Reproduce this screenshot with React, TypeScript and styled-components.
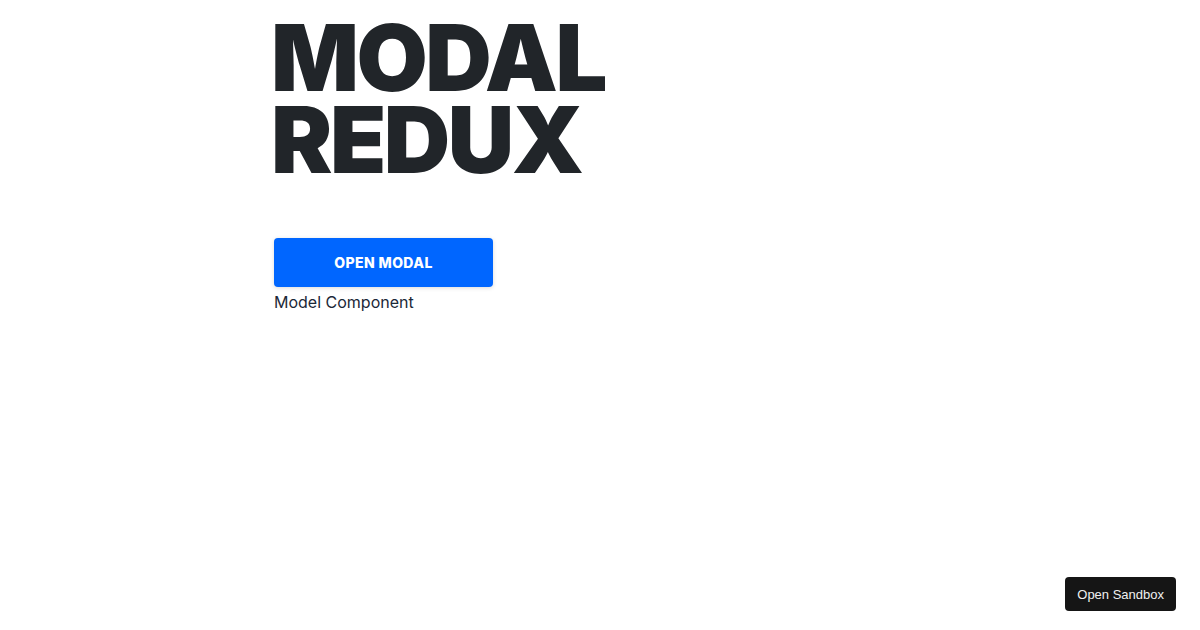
import React from "react"
import styled, { createGlobalStyle } from "styled-components"

const GlobalStyle = createGlobalStyle`
    html, body {
        margin:0;
        padding:0;
        background:#ffffff;
    }
    body {
        font-family:Inter, "Noto Sans", sans-serif;
        color:#212529;
    }
`

const App = () => {
    return(
        <>
            <GlobalStyle/>
            <Page>
                <Content>
                    <Title>
                        <TitleLine>MODAL</TitleLine>
                        <TitleLine>REDUX</TitleLine>
                    </Title>
                    <OpenButton type="button">OPEN MODAL</OpenButton>
                    <Caption>Model Component</Caption>
                </Content>
                <SandboxLink>Open Sandbox</SandboxLink>
            </Page>
        </>
    )
}

const Page = styled.div`
    position:relative;
    width:1200px;
    height:630px;
    overflow:hidden;
`
const Content = styled.div`
    display:flex;
    flex-direction:column;
    align-items:flex-start;
    padding-left:274px;
    padding-top:15px;
`
const Title = styled.h1`
    margin:0 0 0 -3px;
    display:flex;
    flex-direction:column;
    font-family:Inter, sans-serif;
    font-weight:900;
    font-size:92px;
    letter-spacing:-2.5px;
    color:#212529;
`
const TitleLine = styled.span`
    display:block;
    height:85px;
    line-height:92px;
    margin-top:-3px;
`
const OpenButton = styled.button`
    margin-top:59px;
    width:219px;
    height:49px;
    border:none;
    border-radius:4px;
    background:#0066ff;
    color:#ffffff;
    font-family:Inter, sans-serif;
    font-weight:800;
    font-size:14px;
    letter-spacing:0.4px;
    box-shadow:0 1px 4px rgba(0,0,0,0.15);
    cursor:pointer;
`
const Caption = styled.div`
    margin-top:5px;
    font-family:Inter, sans-serif;
    font-size:16px;
    color:#1b2838;
`
const SandboxLink = styled.div`
    position:absolute;
    right:24px;
    bottom:19px;
    height:34px;
    padding:0 12px;
    display:flex;
    align-items:center;
    background:#151515;
    border-radius:4px;
    color:#f0f0f0;
    font-family:"Liberation Sans", Arial, sans-serif;
    font-size:13px;
`

export default App
